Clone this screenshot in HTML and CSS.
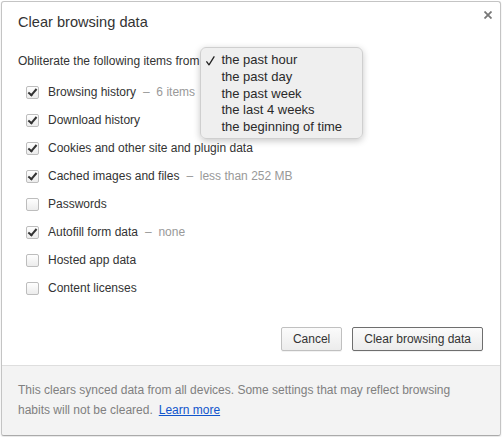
FILE: index.html
```html
<!DOCTYPE html>
<html>
<head>
<meta charset="utf-8">
<link rel="stylesheet" href="styles.css">
</head>
<body>
<div class="dialog">
  <div class="header">
    <div class="title">Clear browsing data</div>
    <svg class="close" width="8" height="8" viewBox="0 0 8 8"><path d="M0.5 0.5L7.5 7.5M7.5 0.5L0.5 7.5" stroke="#777" stroke-width="1.8" fill="none"/></svg>
  </div>
  <div class="content">
    <div class="period">Obliterate the following items from<span class="anchor">
      <div class="menu">
        <div class="item selected"><svg class="tick" width="9" height="10" viewBox="0 0 9 10"><path d="M0.8 5.8L3 8.8L8 0.8" stroke="#222" stroke-width="1.3" fill="none" stroke-linecap="round" stroke-linejoin="round"/></svg>the past hour</div>
        <div class="item">the past day</div>
        <div class="item">the past week</div>
        <div class="item">the last 4 weeks</div>
        <div class="item">the beginning of time</div>
      </div>
    </span></div>
    <div class="rows">
      <div class="row"><span class="box on"></span><span class="label">Browsing history</span><span class="extra">–&nbsp;&nbsp;6 items</span></div>
      <div class="row"><span class="box on"></span><span class="label">Download history</span></div>
      <div class="row"><span class="box on"></span><span class="label">Cookies and other site and plugin data</span></div>
      <div class="row"><span class="box on"></span><span class="label">Cached images and files</span><span class="extra">–&nbsp;&nbsp;less than 252 MB</span></div>
      <div class="row"><span class="box"></span><span class="label">Passwords</span></div>
      <div class="row"><span class="box on"></span><span class="label">Autofill form data</span><span class="extra">–&nbsp;&nbsp;none</span></div>
      <div class="row"><span class="box"></span><span class="label">Hosted app data</span></div>
      <div class="row"><span class="box"></span><span class="label">Content licenses</span></div>
    </div>
  </div>
  <div class="actions">
    <button class="btn">Cancel</button>
    <button class="btn primary">Clear browsing data</button>
  </div>
  <div class="footer">
    <div class="note">This clears synced data from all devices. Some settings that may reflect browsing</div>
    <div class="note"><span>habits will not be cleared.</span><a class="link" href="#">Learn more</a></div>
  </div>
</div>
</body>
</html>
```
FILE: styles.css
```css
html, body {
  margin: 0;
  padding: 0;
  background: #ffffff;
}
body {
  font-family: "Liberation Sans", Arial, sans-serif;
  color: #333;
  font-size: 12px;
}
.dialog {
  box-sizing: border-box;
  width: 500px;
  height: 435px;
  margin: 1px;
  border: 1px solid #c4c4c4;
  border-bottom-color: #aaa;
  border-radius: 3px;
  background: #fff;
  display: flex;
  flex-direction: column;
  box-shadow: 0 1px 2px rgba(0,0,0,0.12);
}
.header {
  display: flex;
  justify-content: space-between;
  align-items: flex-start;
  padding: 10px 8px 0 16px;
}
.title {
  font-size: 14.6px;
  line-height: 20px;
  color: #333;
}
.close {
  display: block;
  margin-top: -1px;
}
.content {
  padding: 0 16px;
}
.period {
  margin-top: 19px;
  line-height: 20px;
  font-size: 12px;
}
.anchor {
  position: relative;
  display: inline-block;
  width: 0;
  height: 20px;
  vertical-align: top;
}
.menu {
  position: absolute;
  left: 1px;
  top: -4px;
  box-sizing: border-box;
  width: 163px;
  height: 92px;
  padding: 4px 0 3px 0;
  background: rgba(239,239,239,0.98);
  border: 1px solid #cfcfcf;
  border-radius: 6px;
  box-shadow: 0 2px 7px rgba(0,0,0,0.22);
  z-index: 10;
}
.item {
  position: relative;
  padding-left: 20px;
  font-size: 13px;
  line-height: 16.8px;
  color: #2a2a2a;
  white-space: nowrap;
}
.tick {
  position: absolute;
  left: 5px;
  top: 4px;
}
.rows {
  margin-top: 7px;
}
.row {
  display: flex;
  align-items: center;
  height: 28px;
  padding-left: 8px;
}
.box {
  box-sizing: border-box;
  width: 13px;
  height: 13px;
  border: 1px solid #bdbdbd;
  border-radius: 2px;
  background: linear-gradient(#fefefe, #ececec);
  margin-right: 9px;
  position: relative;
  flex: none;
}
.box.on::after {
  content: "";
  position: absolute;
  left: 3px;
  top: 0px;
  width: 3px;
  height: 7px;
  border: solid #333;
  border-width: 0 2.5px 2.5px 0;
  transform: rotate(40deg);
}
.label {
  color: #333;
}
.extra {
  color: #999;
  margin-left: 7px;
}
.actions {
  display: flex;
  justify-content: flex-end;
  gap: 10px;
  padding-right: 17px;
  margin-top: 25px;
}
.btn {
  font-family: "Liberation Sans", Arial, sans-serif;
  font-size: 12px;
  color: #333;
  height: 24px;
  padding: 0 11px;
  border: 1px solid #c0c0c0;
  border-radius: 2px;
  background: linear-gradient(#fbfbfb, #ececec);
  box-shadow: 0 1px 0 rgba(0,0,0,0.05);
}
.btn.primary {
  border-color: #6e6e6e;
}
.footer {
  margin-top: auto;
  box-sizing: border-box;
  height: 70px;
  border-top: 1px solid #dedede;
  background: #f3f3f3;
  padding: 14px 16px 0 16px;
  color: #808080;
  font-size: 12px;
  border-radius: 0 0 3px 3px;
}
.note {
  line-height: 20px;
  white-space: nowrap;
}
.link {
  margin-left: 6px;
  color: #1155cc;
  text-decoration: underline;
}
```
